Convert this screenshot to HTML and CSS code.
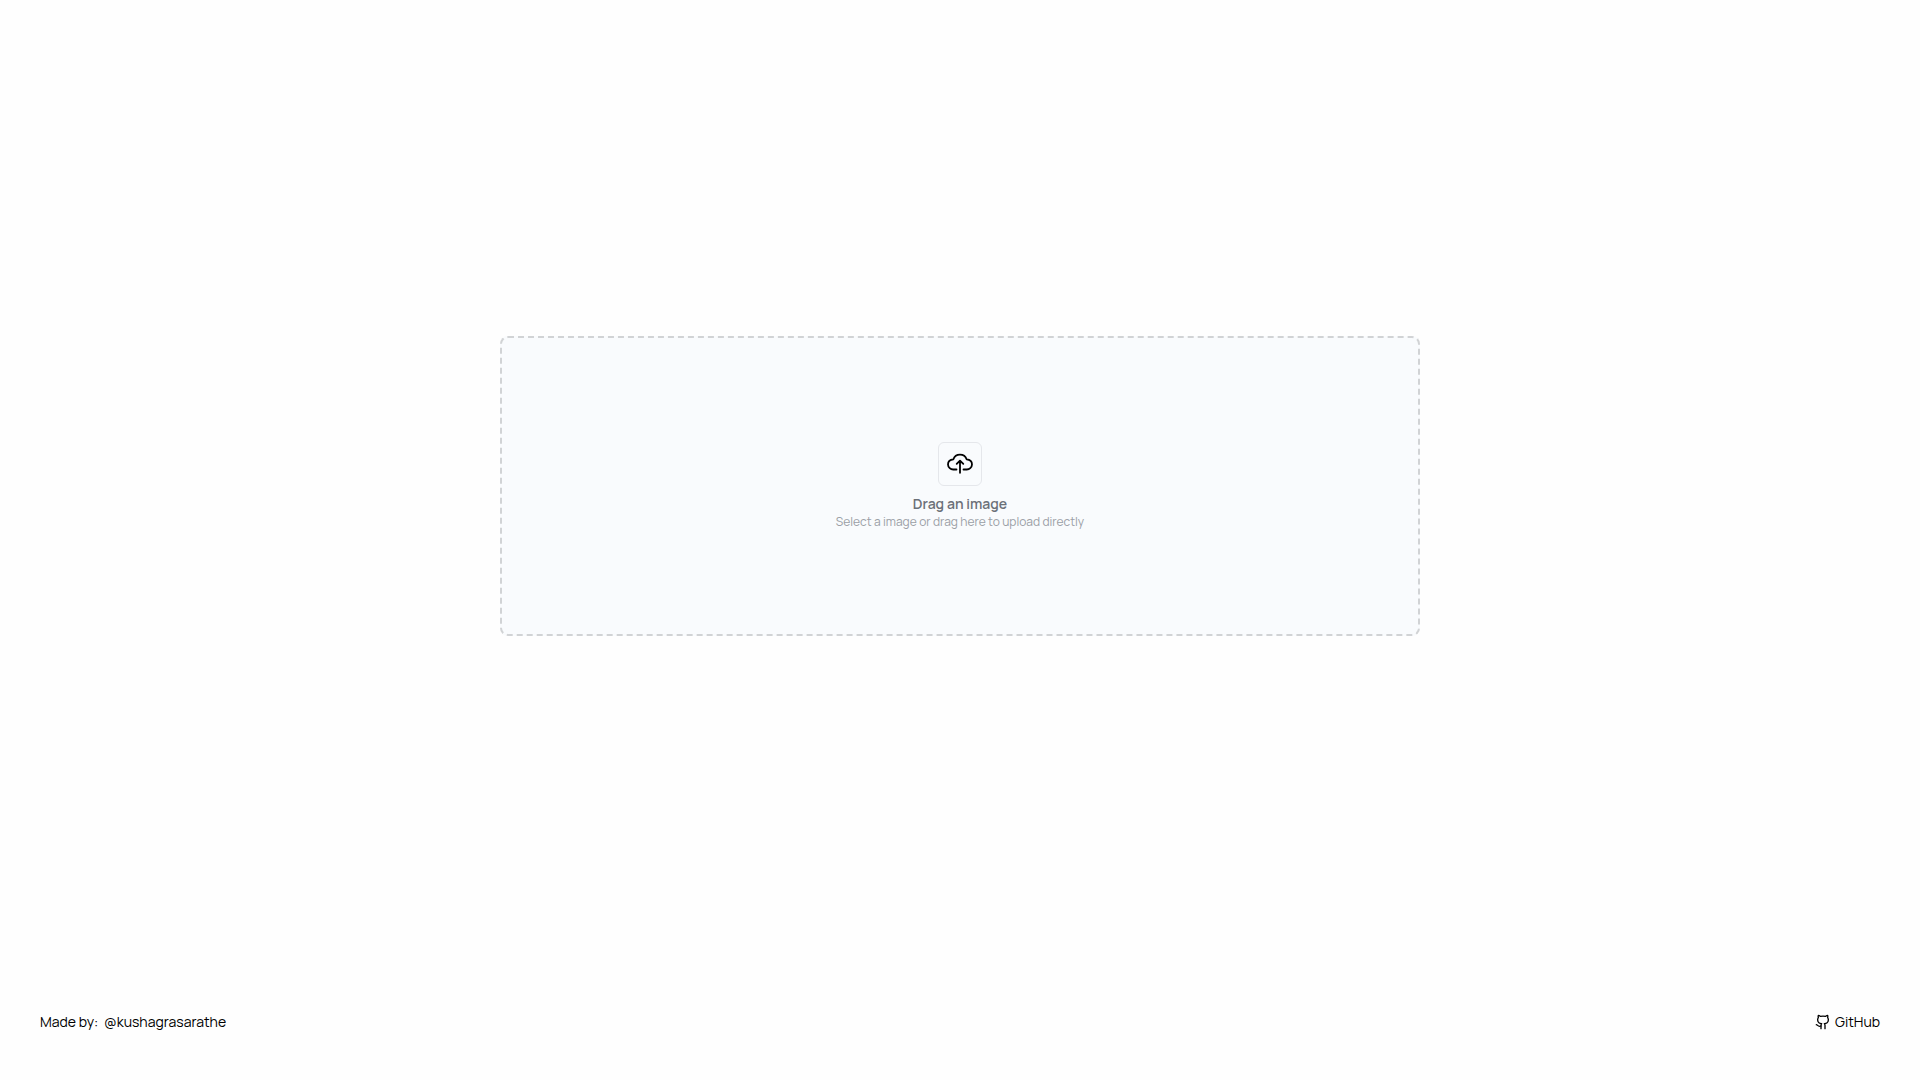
FILE: index.html
```html
<!DOCTYPE html>
<html lang="en">
<head>
    <meta charset="UTF-8">
    <meta name="viewport" content="width=device-width, initial-scale=1.0">
    <title>Image Upload</title>
    <link rel="stylesheet" href="styles.css">
</head>
<body>
    <main>
        <!-- Drop zone -->
        <label class="dropzone" for="image-input">
            <span class="upload-icon">
                <svg width="28" height="28" viewBox="0 0 28 28" fill="none" stroke="currentColor" stroke-width="1.8" stroke-linecap="round" stroke-linejoin="round" aria-hidden="true">
                    <path d="M10.500 19.500H7.500A5.200 5.200 0 0 1 2 14.500c0-2.900 2.200-5 5.400-5.200C8.300 6.500 10.800 4.600 14 4.600s5.700 1.900 6.600 4.700C23.800 9.500 26 11.600 26 14.500a5.200 5.200 0 0 1-5.500 5H17.500"/>
                    <path d="M14 22.800V11M10.700 13.900L14 10.600l3.300 3.300"/>
                </svg>
            </span>
            <span class="dropzone-title">Drag an image</span>
            <span class="dropzone-text">Select a image or drag here to upload directly</span>
        </label>
        <input type="file" id="image-input" accept="image/*">
    </main>

    <footer>
        <p>Made by: <a class="author" href="#">@kushagrasarathe</a></p>
        <a class="github" href="#">
            <svg width="16" height="16" viewBox="0 0 24 24" fill="none" stroke="currentColor" stroke-width="2" stroke-linecap="round" stroke-linejoin="round" aria-hidden="true">
                <path d="M15 22v-4a4.800 4.800 0 0 0-1-3.500c3 0 6-2 6-5.500.08-1.250-.27-2.480-1-3.500.28-1.150.28-2.350 0-3.500 0 0-1 0-3 1.500-2.640-.5-5.360-.5-8 0C6 2 5 2 5 2c-.3 1.150-.3 2.350 0 3.500A5.403 5.403 0 0 0 4 9c0 3.500 3 5.500 6 5.500-.39.490-.68 1.050-.85 1.650-.17.600-.22 1.230-.15 1.850v4"/>
                <path d="M9 18c-4.510 2-5-2-7-2"/>
            </svg>
            GitHub
        </a>
    </footer>
</body>
</html>
```
FILE: styles.css
```css
* {
  box-sizing: border-box;
}

body {
  font-family: Manrope, Inter, sans-serif;
  font-size: 14px;
  line-height: 20px;
  margin: 0;
  min-height: 100vh;
  display: flex;
  flex-direction: column;
  background-color: #fefefe;
  color: #000;
}

a {
  color: inherit;
  text-decoration: none;
}

main {
  flex: 1;
  display: flex;
  align-items: center;
  justify-content: center;
  padding: 20px;
}

/* Drop zone */
.dropzone {
  width: 100%;
  max-width: 920px;
  min-height: 300px;
  display: flex;
  flex-direction: column;
  align-items: center;
  justify-content: center;
  background-color: #f9fbfd;
  border: 2px dashed #d1d3d5;
  border-radius: 8px;
  cursor: pointer;
}

.dropzone:hover {
  background-color: #f3f4f6;
}

.upload-icon {
  padding: 7px;
  margin-bottom: 8px;
  border: 1px solid #e5e7eb;
  border-radius: 6px;
}

.upload-icon svg {
  display: block;
}

.dropzone-title {
  font-weight: 600;
  color: #6b7078;
}

.dropzone-text {
  font-size: 12px;
  line-height: 16px;
  color: #9b9fa6;
}

#image-input {
  display: none;
}

/* Footer */
footer {
  display: flex;
  align-items: center;
  justify-content: space-between;
  padding: 40px 40px 48px;
}

footer p {
  margin: 0;
}

.author {
  margin-left: 3px;
}

.github {
  display: flex;
  align-items: center;
  gap: 4px;
}
```
